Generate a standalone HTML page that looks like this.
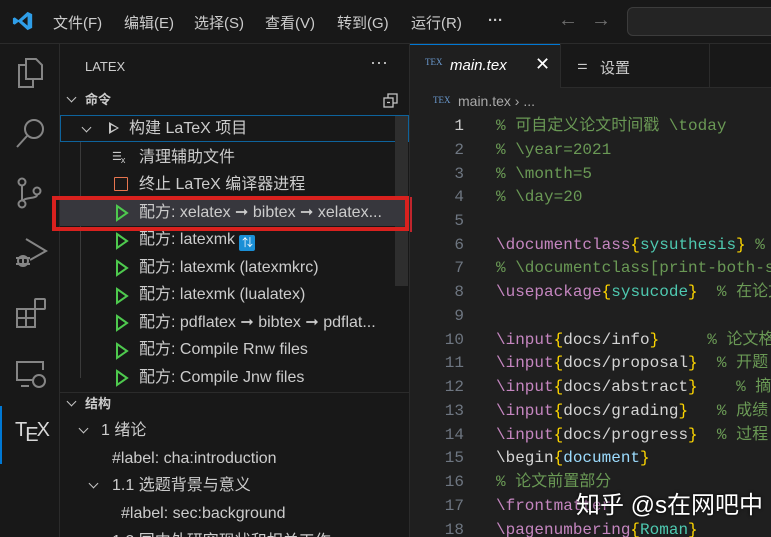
<!DOCTYPE html>
<html><head><meta charset="utf-8"><style>
*{margin:0;padding:0;box-sizing:border-box}
html,body{width:771px;height:537px;overflow:hidden}
body{background:#1f1f1f;font-family:"Liberation Sans","Noto Sans CJK SC",sans-serif;color:#cccccc;position:relative}
.abs{position:absolute}
#title{left:0;top:0;width:771px;height:44px;background:#181818;border-bottom:1px solid #2b2b2b}
.menu{top:12px;font-size:15px;color:#cccccc}
#act{left:0;top:44px;width:60px;height:493px;background:#181818;border-right:1px solid #2b2b2b}
#side{left:60px;top:44px;width:350px;height:493px;background:#181818;border-right:1px solid #2b2b2b;overflow:hidden}
.row{position:absolute;left:0;width:350px;height:27px;font-size:16px;line-height:27px;color:#cccccc;white-space:nowrap}
.tri{position:absolute;width:0;height:0;border-top:6px solid transparent;border-bottom:6px solid transparent;top:8px}
.chev{position:absolute;width:7px;height:7px;border-right:1.5px solid #c5c5c5;border-bottom:1.5px solid #c5c5c5;transform:rotate(45deg)}
#tabs{left:410px;top:44px;width:361px;height:44px;background:#181818;border-bottom:1px solid #2b2b2b}
.code{position:absolute;left:410px;width:361px;height:24px;font-family:"Liberation Mono","Noto Sans CJK SC",monospace;font-size:16px;line-height:24px;white-space:pre;overflow:hidden}
.ln{position:absolute;left:0;width:54px;text-align:right;color:#6e7681}
.tx{position:absolute;left:86px}
.c{color:#6a9955}.k{color:#c586c0}.b{color:#ffd700}.t{color:#4ec9b0}.p{color:#d4d4d4}.v{color:#9cdcfe}
</style></head><body>
<div id="title" class="abs">
<svg class="abs" style="left:12px;top:10px" width="22" height="22" viewBox="0 0 24 24"><path d="M17 2 L22 4.5 V19.5 L17 22 L7 13 L3 16 L1 15 V9 L3 8 L7 11 Z M17 7 L11 12 L17 17 Z" fill="#2f9ee8"/></svg>
<div class="abs menu" style="left:53px">文件(F)</div>
<div class="abs menu" style="left:124px">编辑(E)</div>
<div class="abs menu" style="left:194px">选择(S)</div>
<div class="abs menu" style="left:265px">查看(V)</div>
<div class="abs menu" style="left:337px">转到(G)</div>
<div class="abs menu" style="left:411px">运行(R)</div>
<div class="abs menu" style="left:488px;top:12px;font-weight:bold">···</div>
<div class="abs" style="left:558px;top:9px;font-size:20px;color:#6e6e6e">←</div>
<div class="abs" style="left:591px;top:9px;font-size:20px;color:#6e6e6e">→</div>
<div class="abs" style="left:627px;top:7px;width:160px;height:29px;border:1px solid #3c3c3c;border-radius:6px;background:#242424"></div>
</div>
<div id="act" class="abs">
<svg class="abs" style="left:16px;top:13px" width="28" height="32" viewBox="0 0 28 32" fill="none" stroke="#858585" stroke-width="2"><path d="M10 2 H20 L26 8 V22 H10 Z"/><path d="M10 8 H3 V30 H17 V22"/></svg>
<svg class="abs" style="left:15px;top:73px" width="32" height="32" viewBox="0 0 32 32" fill="none" stroke="#858585" stroke-width="2"><circle cx="19" cy="12" r="9"/><path d="M12 19 L2 30"/></svg>
<svg class="abs" style="left:16px;top:133px" width="28" height="32" viewBox="0 0 28 32" fill="none" stroke="#858585" stroke-width="2"><circle cx="6" cy="5" r="3.5"/><circle cx="6" cy="27" r="3.5"/><circle cx="21" cy="14" r="3.5"/><path d="M6 9 V23 M21 18 C21 22 8 20 7 24"/></svg>
<svg class="abs" style="left:14px;top:192px" width="34" height="34" viewBox="0 0 34 34" fill="none" stroke="#858585" stroke-width="2"><path d="M12 3 L32 15 L16 24"/><circle cx="9" cy="25" r="5"/><path d="M2 22 H16 M2 28 H16 M9 20 V30"/></svg>
<svg class="abs" style="left:15px;top:253px" width="32" height="32" viewBox="0 0 32 32" fill="none" stroke="#858585" stroke-width="2"><rect x="2" y="12" width="9" height="9"/><rect x="11" y="12" width="9" height="9"/><rect x="2" y="21" width="9" height="9"/><rect x="11" y="21" width="9" height="9"/><rect x="20" y="2" width="10" height="10" rx="1"/></svg>
<svg class="abs" style="left:15px;top:314px" width="32" height="32" viewBox="0 0 32 32" fill="none" stroke="#858585" stroke-width="2"><path d="M18 22 H2 V4 H28 V12"/><path d="M6 28 H14"/><circle cx="24" cy="23" r="6"/></svg>
<div class="abs" style="left:0;top:362px;width:2px;height:58px;background:#0078d4"></div>
<div class="abs" style="left:15px;top:375px;font-size:20px;color:#d7d7d7;font-family:'Liberation Sans',sans-serif">T<span style="position:relative;top:5px;margin-left:-2px">E</span><span style="margin-left:-2px">X</span></div>
</div>
<div id="side" class="abs">
<div class="abs" style="left:25px;top:15px;font-size:13px;color:#cccccc">LATEX</div>
<div class="abs" style="left:310px;top:8px;font-size:18px;color:#cccccc">···</div>
<div class="row" style="top:45px;height:22px;line-height:22px"><div class="chev" style="left:8px;top:5px"></div><span style="position:absolute;left:25px;font-size:13px;font-weight:bold">命令</span>
<svg class="abs" style="left:323px;top:4px" width="15" height="15" viewBox="0 0 15 15" fill="none" stroke="#c5c5c5" stroke-width="1.3"><rect x="1" y="5" width="9" height="9"/><path d="M5 5 V1 H14 V10 H10 M4 9.5 H7"/></svg></div>
<div class="row" style="top:71px;left:0;width:349px;height:27px;border:1px solid #0e639c"><div class="chev" style="left:22px;top:8px"></div><div class="tri" style="left:48px;top:6px;border-left:10px solid #c5c5c5"></div><div class="tri" style="left:50px;top:8.5px;border-top:3.5px solid transparent;border-bottom:3.5px solid transparent;border-left:6px solid #181818"></div><span style="position:absolute;left:68px;top:-1px">构建 LaTeX 项目</span></div>
<div class="abs" style="left:20px;top:98px;width:1px;height:236px;background:#3a3a3a"></div>
<div class="abs" style="left:335px;top:72px;width:13px;height:170px;background:#2e2e2e"></div>
<div class="row" style="top:100px"><span style="position:absolute;left:52px;font-size:11px;letter-spacing:-1px">☰<sub style="font-size:9px">x</sub></span><span style="position:absolute;left:79px">清理辅助文件</span></div>
<div class="row" style="top:127px"><div class="abs" style="left:54px;top:6px;width:14px;height:14px;border:1.5px solid #e8754f;border-radius:1px"></div><span style="position:absolute;left:79px">终止 LaTeX 编译器进程</span></div>
<div class="row" style="top:155px;background:#37373d"><span style="position:absolute;left:79px">配方: xelatex ➞ bibtex ➞ xelatex...</span></div>
<div class="row" style="top:182px"><span style="position:absolute;left:79px">配方: latexmk <span style="display:inline-block;width:16px;height:16px;background:#1a8fd6;color:#fff;font-size:11px;line-height:16px;text-align:center;vertical-align:-2px;border-radius:2px">⇅</span></span></div>
<div class="row" style="top:210px"><span style="position:absolute;left:79px">配方: latexmk (latexmkrc)</span></div>
<div class="row" style="top:237px"><span style="position:absolute;left:79px">配方: latexmk (lualatex)</span></div>
<div class="row" style="top:265px"><span style="position:absolute;left:79px">配方: pdflatex ➞ bibtex ➞ pdflat...</span></div>
<div class="row" style="top:292px"><span style="position:absolute;left:79px">配方: Compile Rnw files</span></div>
<div class="row" style="top:320px"><span style="position:absolute;left:79px">配方: Compile Jnw files</span></div>
<svg class="abs" style="left:54px;top:160px" width="16" height="200" viewBox="0 0 16 200" fill="none" stroke="#4ec94e" stroke-width="2"><path d="M3 2 L13 9 L3 16 Z"/><path d="M3 30 L13 37 L3 44 Z"/><path d="M3 57 L13 64 L3 71 Z"/><path d="M3 85 L13 92 L3 99 Z"/><path d="M3 112 L13 119 L3 126 Z"/><path d="M3 140 L13 147 L3 154 Z"/><path d="M3 167 L13 174 L3 181 Z"/></svg>
<div class="abs" style="left:0;top:348px;width:350px;height:1px;background:#2b2b2b"></div>
<div class="row" style="top:346px"><div class="chev" style="left:8px;top:8px"></div><span style="position:absolute;left:25px;font-size:13px;font-weight:bold">结构</span></div>
<div class="row" style="top:373px"><div class="chev" style="left:20px;top:8px"></div><span style="position:absolute;left:41px">1 绪论</span></div>
<div class="row" style="top:401px"><span style="position:absolute;left:52px">#label: cha:introduction</span></div>
<div class="row" style="top:428px"><div class="chev" style="left:30px;top:8px"></div><span style="position:absolute;left:52px">1.1 选题背景与意义</span></div>
<div class="row" style="top:456px"><span style="position:absolute;left:61px">#label: sec:background</span></div>
<div class="row" style="top:484px"><span style="position:absolute;left:52px">1.2 国内外研究现状和相关工作</span></div>
</div>
<div class="abs" style="left:52px;top:196px;width:357px;height:35px;border:4px solid #d9211e"></div>
<div id="tabs" class="abs">
<div class="abs" style="left:0;top:0;width:150px;height:44px;background:#1f1f1f;border-top:1px solid #0078d4"></div>
<div class="abs" style="left:15px;top:13px;font-size:9px;color:#6b9bd1;font-family:'Liberation Serif',serif">TEX</div>
<div class="abs" style="left:40px;top:13px;font-size:15px;font-style:italic;color:#ffffff">main.tex</div>
<div class="abs" style="left:125px;top:10px;font-size:18px;color:#ffffff">✕</div>
<div class="abs" style="left:150px;top:0;width:150px;height:43px;border-right:1px solid #2b2b2b;border-left:1px solid #2b2b2b"></div>
<div class="abs" style="left:167px;top:14px;font-size:12px;color:#cccccc">⚌</div>
<div class="abs" style="left:190px;top:13px;font-size:15px;color:#cccccc">设置</div>
</div>
<div class="abs" style="left:433px;top:95px;font-size:9px;color:#6b9bd1;font-family:'Liberation Serif',serif">TEX</div>
<div class="abs" style="left:458px;top:93px;font-size:14px;color:#a9a9a9">main.tex › ...</div>
<div class="abs" style="left:410px;top:197px;width:2px;height:35px;background:#c0262d"></div>
<div class="code" style="top:114px"><span class="ln" style="color:#cccccc">1</span><span class="tx c">% 可自定义论文时间戳 \today</span></div>
<div class="code" style="top:138px"><span class="ln">2</span><span class="tx c">% \year=2021</span></div>
<div class="code" style="top:162px"><span class="ln">3</span><span class="tx c">% \month=5</span></div>
<div class="code" style="top:185px"><span class="ln">4</span><span class="tx c">% \day=20</span></div>
<div class="code" style="top:209px"><span class="ln">5</span></div>
<div class="code" style="top:233px"><span class="ln">6</span><span class="tx"><span class="k">\documentclass</span><span class="b">{</span><span class="t">sysuthesis</span><span class="b">}</span> <span class="c">% 模板</span></span></div>
<div class="code" style="top:256px"><span class="ln">7</span><span class="tx c">% \documentclass[print-both-sides]</span></div>
<div class="code" style="top:280px"><span class="ln">8</span><span class="tx"><span class="k">\usepackage</span><span class="b">{</span><span class="t">sysucode</span><span class="b">}</span>  <span class="c">% 在论文</span></span></div>
<div class="code" style="top:304px"><span class="ln">9</span></div>
<div class="code" style="top:328px"><span class="ln">10</span><span class="tx"><span class="k">\input</span><span class="b">{</span><span class="p">docs/info</span><span class="b">}</span>     <span class="c">% 论文格式</span></span></div>
<div class="code" style="top:351px"><span class="ln">11</span><span class="tx"><span class="k">\input</span><span class="b">{</span><span class="p">docs/proposal</span><span class="b">}</span>  <span class="c">% 开题</span></span></div>
<div class="code" style="top:375px"><span class="ln">12</span><span class="tx"><span class="k">\input</span><span class="b">{</span><span class="p">docs/abstract</span><span class="b">}</span>    <span class="c">% 摘要</span></span></div>
<div class="code" style="top:399px"><span class="ln">13</span><span class="tx"><span class="k">\input</span><span class="b">{</span><span class="p">docs/grading</span><span class="b">}</span>   <span class="c">% 成绩</span></span></div>
<div class="code" style="top:423px"><span class="ln">14</span><span class="tx"><span class="k">\input</span><span class="b">{</span><span class="p">docs/progress</span><span class="b">}</span>  <span class="c">% 过程</span></span></div>
<div class="code" style="top:446px"><span class="ln">15</span><span class="tx"><span class="p">\begin</span><span class="b">{</span><span class="v">document</span><span class="b">}</span></span></div>
<div class="code" style="top:470px"><span class="ln">16</span><span class="tx c">% 论文前置部分</span></div>
<div class="code" style="top:494px"><span class="ln">17</span><span class="tx k">\frontmatter</span></div>
<div class="code" style="top:518px"><span class="ln">18</span><span class="tx"><span class="k">\pagenumbering</span><span class="b">{</span><span class="t">Roman</span><span class="b">}</span></span></div>
<div class="abs" style="left:576px;top:485px;font-size:24px;color:#ffffff;text-shadow:0 0 3px #000">知乎 @s在网吧中</div>
</body></html>
